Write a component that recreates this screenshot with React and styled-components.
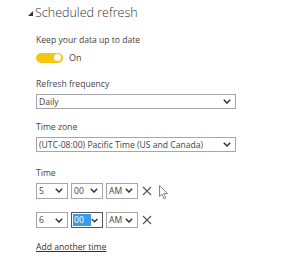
import React from "react";
import styled, { createGlobalStyle } from "styled-components";

const Global = createGlobalStyle`
  html, body { margin: 0; padding: 0; background: #fff; }
  body { font-family: "Open Sans", "Noto Sans", sans-serif; color: #333; }
`;

const Page = styled.div`
  width: 300px;
  height: 267px;
  overflow: hidden;
  padding: 4px 0 0 28px;
  box-sizing: border-box;
`;

const Title = styled.div`
  display: flex;
  align-items: center;
  gap: 2px;
  font-size: 12.5px;
  font-weight: 300;
  color: #333;
  line-height: 18px;
  height: 18px;
`;

const Body = styled.div`
  padding-left: 8px;
  display: flex;
  flex-direction: column;
`;

const Label = styled.div`
  font-size: 8.6px;
  line-height: 12px;
  color: #444;
  margin-top: ${(p) => p.$mt || 0}px;
`;

const ToggleRow = styled.div`
  display: flex;
  align-items: center;
  gap: 6px;
  margin-top: 5px;
  font-size: 9px;
  color: #444;
`;

const Switch = styled.div`
  width: 27px;
  height: 10px;
  border-radius: 5px;
  background: #f2c811;
  position: relative;
  &::after {
    content: "";
    position: absolute;
    right: 2px;
    top: 1.5px;
    width: 7px;
    height: 7px;
    border-radius: 50%;
    background: #fff;
  }
`;

const Select = styled.div`
  box-sizing: border-box;
  width: ${(p) => p.$w}px;
  height: ${(p) => p.$h || 15}px;
  border: 1px solid ${(p) => (p.$focus ? "#555" : "#a6a6a6")};
  display: flex;
  align-items: center;
  justify-content: space-between;
  padding: 0 4px 0 ${(p) => (p.$focus ? 1 : 2)}px;
  font-size: 8.6px;
  color: #444;
  margin-top: ${(p) => p.$mt || 0}px;
  background: #fff;
`;

const Selected = styled.span`
  background: ${(p) => (p.$hl ? "#3b9be6" : "transparent")};
  color: ${(p) => (p.$hl ? "#fff" : "#444")};
  padding: ${(p) => (p.$hl ? "0 7px 0 1px" : "0")};
  line-height: ${(p) => (p.$hl ? "12px" : "10px")};
`;

const TimeRow = styled.div`
  display: flex;
  align-items: center;
  gap: 3px;
  margin-top: ${(p) => p.$mt || 0}px;
`;

const Close = styled.span`
  display: flex;
  margin-left: 1px;
`;

const Cursor = styled.span`
  display: flex;
  margin-left: 4px;
  margin-top: 4px;
`;

const Link = styled.a`
  font-size: 8.6px;
  color: #333;
  text-decoration: underline;
  margin-top: 13px;
  line-height: 12px;
`;

const Chevron = () => (
  <svg width="8" height="5" viewBox="0 0 8 5">
    <path d="M0.8 0.8 L4 4 L7.2 0.8" fill="none" stroke="#333" strokeWidth="1.5" />
  </svg>
);

const X = () => (
  <svg width="10" height="10" viewBox="0 0 10 10">
    <path d="M1 1 L9 9 M9 1 L1 9" stroke="#555" strokeWidth="1.1" />
  </svg>
);

const Triangle = () => (
  <svg width="5" height="5" viewBox="0 0 5 5">
    <polygon points="5,0 5,5 0,5" fill="#333" />
  </svg>
);

const Pointer = () => (
  <svg width="10" height="15" viewBox="0 0 10 15">
    <path d="M0.5 0.5 L0.5 11.5 L3 9.2 L5 13.8 L6.8 13 L4.9 8.6 L8.5 8.6 Z" fill="#fff" stroke="#777" strokeWidth="0.9" strokeLinejoin="round" />
  </svg>
);

const Drop = ({ w, h, mt, focus, hl, children }) => (
  <Select $w={w} $h={h} $mt={mt} $focus={focus}>
    <Selected $hl={hl}>{children}</Selected>
    <Chevron />
  </Select>
);

export default function App() {
  return (
    <>
      <Global />
      <Page>
        <Title>
          <Triangle />
          <span>Scheduled refresh</span>
        </Title>
        <Body>
          <Label $mt={12}>Keep your data up to date</Label>
          <ToggleRow>
            <Switch />
            <span>On</span>
          </ToggleRow>
          <Label $mt={14}>Refresh frequency</Label>
          <Drop w={200} mt={4}>Daily</Drop>
          <Label $mt={12}>Time zone</Label>
          <Drop w={200} mt={4}>(UTC-08:00) Pacific Time (US and Canada)</Drop>
          <Label $mt={15}>Time</Label>
          <TimeRow $mt={2}>
            <Drop w={32} h={16}>5</Drop>
            <Drop w={32} h={16}>00</Drop>
            <Drop w={32} h={16}>AM</Drop>
            <Close><X /></Close>
            <Cursor><Pointer /></Cursor>
          </TimeRow>
          <TimeRow $mt={12}>
            <Drop w={32} h={16}>6</Drop>
            <Drop w={32} h={16} focus hl>00</Drop>
            <Drop w={32} h={16}>AM</Drop>
            <Close><X /></Close>
          </TimeRow>
          <Link>Add another time</Link>
        </Body>
      </Page>
    </>
  );
}
